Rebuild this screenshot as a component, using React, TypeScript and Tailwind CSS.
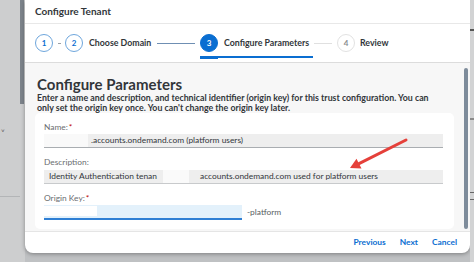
import React from 'react';

const StepCircle: React.FC<{ n: number; state: 'done' | 'active' | 'todo' }> = ({ n, state }) => {
  const cls =
    state === 'active'
      ? 'bg-[#0a6ed1] text-white border-[#0a6ed1]'
      : state === 'done'
        ? 'bg-white text-[#0a6ed1] border-[#6ea6dc]'
        : 'bg-white text-[#8a8d90] border-[#e2e2e2]';
  return (
    <div className={`w-[18px] h-[18px] shrink-0 rounded-full border flex items-center justify-center text-[8px] ${cls}`}>
      {n}
    </div>
  );
};

const Label: React.FC<{ text: string; required?: boolean }> = ({ text, required }) => (
  <div className="h-[12px] text-[8.4px] leading-[12px] text-[#6a6d70]">
    {text}
    {required && <span className="text-[#bb0000] ml-[1px]">*</span>}
  </div>
);

export default function App() {
  return (
    <div className="relative w-[474px] h-[262px] overflow-hidden flex bg-[#bfc1c3] font-['Lato',sans-serif]">
      {/* page behind the dialog */}
      <div className="w-[25px] shrink-0 flex flex-col bg-[#cdcecf]">
        <div className="flex h-[104px]">
          <div className="flex-1" />
          <div className="w-[4px] bg-[#7d848b]" />
          <div className="w-[1px]" />
        </div>
        <div className="h-[24px]" />
        <div className="pl-[1px] text-[8px] leading-[8px] text-[#555]">˅</div>
        <div className="h-[60px]" />
        <div className="h-[1px] bg-[#b3b5b7] mr-[5px]" />
        <div className="flex-1" />
      </div>

      {/* dialog */}
      <div className="w-[445px] h-[253px] shrink-0 flex flex-col bg-white rounded-b-[8px] shadow-[0_1px_4px_rgba(0,0,0,0.35)]">
        <div className="h-[24px] shrink-0 flex items-center px-[10px] border-b border-[#e8e8e8] text-[10px] font-bold text-[#32363a]">
          Configure Tenant
        </div>

        <div className="relative h-[39px] shrink-0 flex items-center pl-[10px] border-b border-[#dcdcdc] text-[8.8px] font-bold text-[#32363a]">
          <StepCircle n={1} state="done" />
          <div className="ml-[5px] w-[3px] h-[1px] bg-[#9aa0a6]" />
          <div className="ml-[4px]"><StepCircle n={2} state="done" /></div>
          <div className="ml-[6px] w-[62px] whitespace-nowrap">Choose Domain</div>
          <div className="ml-[6px] w-[38px] h-[1px] bg-[#6f8fb3]" />
          <div className="ml-[5px]"><StepCircle n={3} state="active" /></div>
          <div className="ml-[6px] w-[86px] whitespace-nowrap">Configure Parameters</div>
          <div className="ml-[4px] w-[18px] h-[1px] bg-[#e0e0e0]" />
          <div className="ml-[5px]"><StepCircle n={4} state="todo" /></div>
          <div className="ml-[5px] whitespace-nowrap">Review</div>
          <div className="absolute left-[175px] bottom-[4px] w-[113px] h-[2px] bg-[#0a6ed1]" />
          <div className="absolute left-[175px] bottom-[3px] w-[18px] h-[3px] bg-[#0a6ed1]" />
        </div>

        <div className="flex-1 flex bg-[#f7f7f7] overflow-hidden">
          <div className="flex-1 flex flex-col pt-[12px] pl-[10px] pr-[10px] pb-[2px]">
            <div className="pl-[2px] text-[15px] leading-[18px] font-bold text-[#32363a]">Configure Parameters</div>
            <div className="pl-[2px] text-[8.8px] leading-[9.5px] font-bold text-[#32363a] whitespace-nowrap">
              Enter a name and description, and technical identifier (origin key) for this trust configuration. You can
              <br />
              only set the origin key once. You can't change the origin key later.
            </div>
            <div className="mt-[1px] flex-1 bg-white rounded-[5px] pt-[8px] pl-[9px] pr-[11px] flex flex-col">
              <Label text="Name:" required />
              <div className="mt-[1px] h-[14px] flex items-center bg-[#eeeeee] border-b border-[#a9adb1] text-[8.4px] text-[#32363a]">
                <div className="w-[44px] h-full bg-[#f9f9f9]" />
                <span className="ml-[3px]">.accounts.ondemand.com (platform users)</span>
              </div>

              <div className="h-[8px]" />
              <Label text="Description:" />
              <div className="mt-[2px] h-[14px] flex items-center bg-[#eeeeee] border-b border-[#c8cacc] text-[8.4px] text-[#32363a]">
                <span className="ml-[5px] w-[114px] whitespace-nowrap">Identity Authentication tenan</span>
                <div className="w-[26px] h-full bg-[#fafafa]" />
                <span className="ml-[11px]">accounts.ondemand.com used for platform users</span>
              </div>

              <div className="h-[8px]" />
              <Label text="Origin Key:" required />
              <div className="mt-[1px] flex items-center">
                <div className="w-[198px] h-[15px] bg-[#e3f1fb] border-b-2 border-[#2f7fd4] flex items-start">
                  <div className="w-[53px] h-[10px] mt-[1px] bg-white" />
                </div>
                <span className="ml-[5px] text-[8.4px] text-[#5a5e62]">-platform</span>
              </div>
            </div>
          </div>
          <div className="w-[6px] shrink-0 pt-[5px] pb-[2px] flex justify-start">
            <div className="w-[4px] h-full rounded-full bg-[#7e8c9b]" />
          </div>
        </div>

        <div className="h-[22px] shrink-0 flex items-center justify-end gap-[14px] pr-[13px] border-t border-[#e5e5e5] text-[8.4px] font-bold text-[#0a6ed1]">
          <span>Previous</span>
          <span>Next</span>
          <span>Cancel</span>
        </div>
      </div>

      <div className="flex-1 flex flex-col bg-[#d2d3d4]">
        <div className="h-[29px]" />
        <div className="h-[2px] bg-[#555]" />
        <div className="h-[87px]" />
        <div className="h-[2px] bg-[#8a8a8a]" />
        <div className="h-[72px]" />
        <div className="h-[1px] bg-[#666]" />
        <div className="h-[6px]" />
        <div className="h-[1px] bg-[#666]" />
        <div className="flex-1" />
      </div>

      {/* annotation arrow */}
      <svg className="absolute left-0 top-0" width="474" height="262" viewBox="0 0 474 262">
        <line x1="406" y1="140" x2="359" y2="163.6" stroke="#e5403a" strokeWidth="3" strokeLinecap="round" />
        <polygon points="350,168 361.5,168.5 356.5,158.8" fill="#e5403a" />
      </svg>
    </div>
  );
}
